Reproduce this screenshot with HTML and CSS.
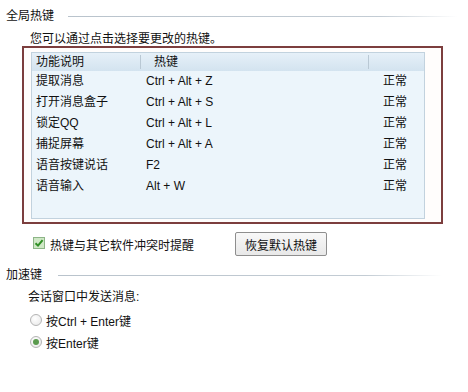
FILE: index.html
```html
<!DOCTYPE html>
<html lang="zh-CN">
<head>
<meta charset="utf-8">
<title>热键设置</title>
<link rel="stylesheet" href="styles.css">
</head>
<body>
<div class="page">
  <div class="legend legend-top"><span class="legend-text">全局热键</span><span class="legend-line"></span></div>
  <div class="hint">您可以通过点击选择要更改的热键。</div>
  <div class="highlight">
    <div class="list">
      <div class="list-head">
        <div class="c1">功能说明</div>
        <div class="c2 sep">热键</div>
        <div class="c3 sep"></div>
      </div>
      <div class="list-row"><div class="c1">提取消息</div><div class="c2">Ctrl + Alt + Z</div><div class="c3">正常</div></div>
      <div class="list-row"><div class="c1">打开消息盒子</div><div class="c2">Ctrl + Alt + S</div><div class="c3">正常</div></div>
      <div class="list-row"><div class="c1">锁定QQ</div><div class="c2">Ctrl + Alt + L</div><div class="c3">正常</div></div>
      <div class="list-row"><div class="c1">捕捉屏幕</div><div class="c2">Ctrl + Alt + A</div><div class="c3">正常</div></div>
      <div class="list-row"><div class="c1">语音按键说话</div><div class="c2">F2</div><div class="c3">正常</div></div>
      <div class="list-row"><div class="c1">语音输入</div><div class="c2">Alt + W</div><div class="c3">正常</div></div>
    </div>
  </div>
  <div class="options-row">
    <label class="check">
      <svg class="check-box" width="12" height="12" viewBox="0 0 12 12">
        <rect x="0.5" y="0.5" width="11" height="11" fill="#cfe8c6" stroke="#8db587"/>
        <path d="M2.5 6.2 L5 8.6 L9.6 3.2" fill="none" stroke="#2f8f25" stroke-width="2"/>
      </svg>
      <span>热键与其它软件冲突时提醒</span>
    </label>
    <button class="btn">恢复默认热键</button>
  </div>
  <div class="legend legend-second"><span class="legend-text">加速键</span><span class="legend-line"></span></div>
  <div class="sub">会话窗口中发送消息:</div>
  <div class="radio-row"><span class="radio"></span><span>按Ctrl + Enter键</span></div>
  <div class="radio-row"><span class="radio checked"></span><span>按Enter键</span></div>
</div>
</body>
</html>
```
FILE: styles.css
```css
* { box-sizing: border-box; }
html, body { margin: 0; padding: 0; background: #fff; }
body {
  font-family: "Liberation Sans", "Noto Sans CJK SC", sans-serif;
  font-size: 12px;
  color: #111;
  width: 468px;
  height: 392px;
  overflow: hidden;
}
.page { display: flex; flex-direction: column; }
.legend {
  display: flex;
  align-items: center;
  height: 16px;
  line-height: 16px;
  margin-left: 6px;
}
.legend-top { margin-top: 8px; }
.legend-second { margin-top: 11px; }
.legend-text { white-space: nowrap; }
.legend-line {
  flex: 1;
  height: 1px;
  margin-left: 14px;
  margin-right: 10px;
  background: linear-gradient(to right, #b9c3cc, #c3ccd4 80%, rgba(210,216,222,0));
}
.legend-second .legend-line { margin-left: 16px; margin-right: 26px; }
.hint {
  margin-top: 8px;
  margin-left: 30px;
  height: 14px;
  line-height: 14px;
}
.highlight {
  margin-left: 22px;
  width: 421px;
  height: 178px;
  border: 2px solid #7c3e3e;
  padding: 4px 16px 3px 7px;
  background: #fffdfc;
}
.list {
  width: 394px;
  height: 167px;
  border: 1px solid #c2d2de;
  background: #ecf5fb;
}
.list-head {
  display: flex;
  height: 18px;
  line-height: 18px;
  background: linear-gradient(to bottom, #e6f0f8, #d3e3ef);
}
.list-row {
  display: flex;
  height: 21px;
  line-height: 21px;
}
.c1 { width: 108px; padding-left: 4px; }
.c2 { width: 228px; padding-left: 6px; }
.list-head .c2 { padding-left: 13px; }
.c3 { flex: 1; padding-left: 15px; }
.sep { border-left: 1px solid #b9c8d4; }
.list-head .sep { margin: 2px 0; line-height: 14px; }
.options-row {
  display: flex;
  align-items: center;
  margin-top: 8px;
  height: 24px;
}
.check {
  display: flex;
  align-items: center;
  margin-left: 33px;
  width: 202px;
}
.check-box { margin-right: 5px; flex: none; margin-top: -3px; }
.btn {
  width: 92px;
  height: 24px;
  padding: 0;
  font: inherit;
  color: #111;
  border: 1px solid #8e8e8e;
  border-radius: 2px;
  background: linear-gradient(to bottom, #f8f8f8, #e8e8e8);
}
.sub {
  margin-top: 7px;
  margin-left: 28px;
  height: 14px;
  line-height: 14px;
}
.radio-row {
  display: flex;
  align-items: center;
  height: 22px;
  margin-left: 30px;
}
.sub + .radio-row { margin-top: 5px; }
.radio {
  width: 12px;
  height: 12px;
  border-radius: 50%;
  border: 1px solid #b4b4b4;
  background: radial-gradient(circle at 40% 35%, #ffffff, #e6e6e6);
  margin-right: 4px;
  flex: none;
  display: flex;
  align-items: center;
  justify-content: center;
}
.radio.checked::after {
  content: "";
  width: 6px;
  height: 6px;
  border-radius: 50%;
  background: #5a9a4e;
}
```
